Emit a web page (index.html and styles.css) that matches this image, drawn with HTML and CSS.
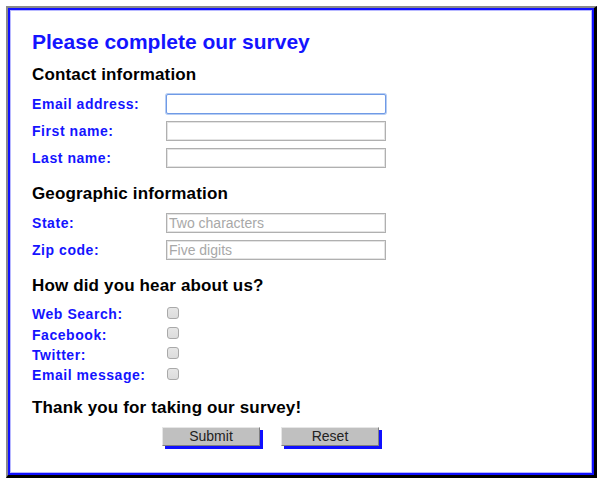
FILE: index.html
```html
<!DOCTYPE html>
<html lang="en">
<head>
  <meta charset="UTF-8">
  <meta name="viewport" content="width=device-width, initial-scale=1.0">
  <title>Survey</title>
  <link rel="stylesheet" href="styles.css">
</head>
<body>
  <div class="frame">
    <form class="survey">
      <h1>Please complete our survey</h1>

      <h2>Contact information</h2>
      <div class="fields">
        <label class="row"><span>Email address:</span><input type="text" class="focused"></label>
        <label class="row"><span>First name:</span><input type="text"></label>
        <label class="row"><span>Last name:</span><input type="text"></label>
      </div>

      <h2 class="geo">Geographic information</h2>
      <div class="fields">
        <label class="row"><span>State:</span><input type="text" placeholder="Two characters"></label>
        <label class="row"><span>Zip code:</span><input type="text" placeholder="Five digits"></label>
      </div>

      <h2 class="hear">How did you hear about us?</h2>
      <div class="checks">
        <label class="check"><span>Web Search:</span><input type="checkbox"></label>
        <label class="check"><span>Facebook:</span><input type="checkbox"></label>
        <label class="check"><span>Twitter:</span><input type="checkbox"></label>
        <label class="check"><span>Email message:</span><input type="checkbox"></label>
      </div>

      <h2 class="thanks">Thank you for taking our survey!</h2>
      <div class="buttons">
        <button type="submit">Submit</button>
        <button type="reset">Reset</button>
      </div>
    </form>
  </div>
</body>
</html>
```

FILE: styles.css
```css
body {
  font-family: "Liberation Sans", Arial, sans-serif;
  margin: 0;
  padding: 6px;
  background-color: #fff;
}

.frame {
  width: 586px;
  height: 467px;
  border-top: 2px solid #8a8a8a;
  border-left: 2px solid #8a8a8a;
  border-right: 3px solid #000;
  border-bottom: 3px solid #000;
}

.survey {
  box-sizing: border-box;
  height: 100%;
  border: 2px solid #1010ff;
  box-shadow: inset 0 0 0 1px #b8b8ff;
  padding: 20px 22px 0;
}

h1 {
  margin: 0;
  font-size: 21px;
  line-height: 23px;
  color: #1414ff;
}

h2 {
  margin: 12px 0 0;
  font-size: 17px;
  line-height: 20px;
  letter-spacing: 0.15px;
  color: #000;
}

h2.geo,
h2.hear {
  margin-top: 16px;
}

.fields {
  display: flex;
  flex-direction: column;
  gap: 7px;
  margin-top: 9px;
}

.row,
.check {
  display: flex;
  align-items: center;
  font-size: 14px;
  font-weight: bold;
  letter-spacing: 0.55px;
  color: #1414ff;
}

.row span,
.check span {
  width: 134px;
  flex-shrink: 0;
}

.row {
  height: 20px;
}

.row input {
  box-sizing: border-box;
  width: 220px;
  height: 20px;
  margin: 0;
  padding: 0 2px;
  border: 1px solid #b0b0b0;
  box-shadow: inset 0 0 0 1px #e4e4e4;
  font-family: inherit;
  font-size: 14px;
  letter-spacing: 0;
  outline: none;
}

.row input::placeholder {
  color: #a8a8a8;
}

.row input.focused {
  border: 1px solid #6f9ae6;
  border-radius: 2px;
  box-shadow: 0 0 0 1px #b6cdf3;
}

.checks {
  display: flex;
  flex-direction: column;
  margin-top: 8px;
}

.check {
  height: 20.4px;
}

.check input {
  appearance: none;
  width: 12px;
  height: 12px;
  margin: 0 0 3px 1px;
  border: 1px solid #a9a9a9;
  border-radius: 3px;
  background: linear-gradient(#e6e6e6, #dcdcdc);
}

h2.thanks {
  margin-top: 12px;
}

.buttons {
  display: flex;
  gap: 21px;
  margin-top: 9px;
  padding-left: 130px;
}

button {
  box-sizing: border-box;
  width: 98px;
  height: 19px;
  padding: 0;
  background-color: #c0c0c0;
  border-top: 1px solid #e6e6e6;
  border-left: 1px solid #e6e6e6;
  border-right: 1px solid #808080;
  border-bottom: 1px solid #808080;
  box-shadow: 3px 3px 0 #1010ff;
  font-family: inherit;
  font-size: 14px;
  line-height: 16px;
  color: #222;
}
```
